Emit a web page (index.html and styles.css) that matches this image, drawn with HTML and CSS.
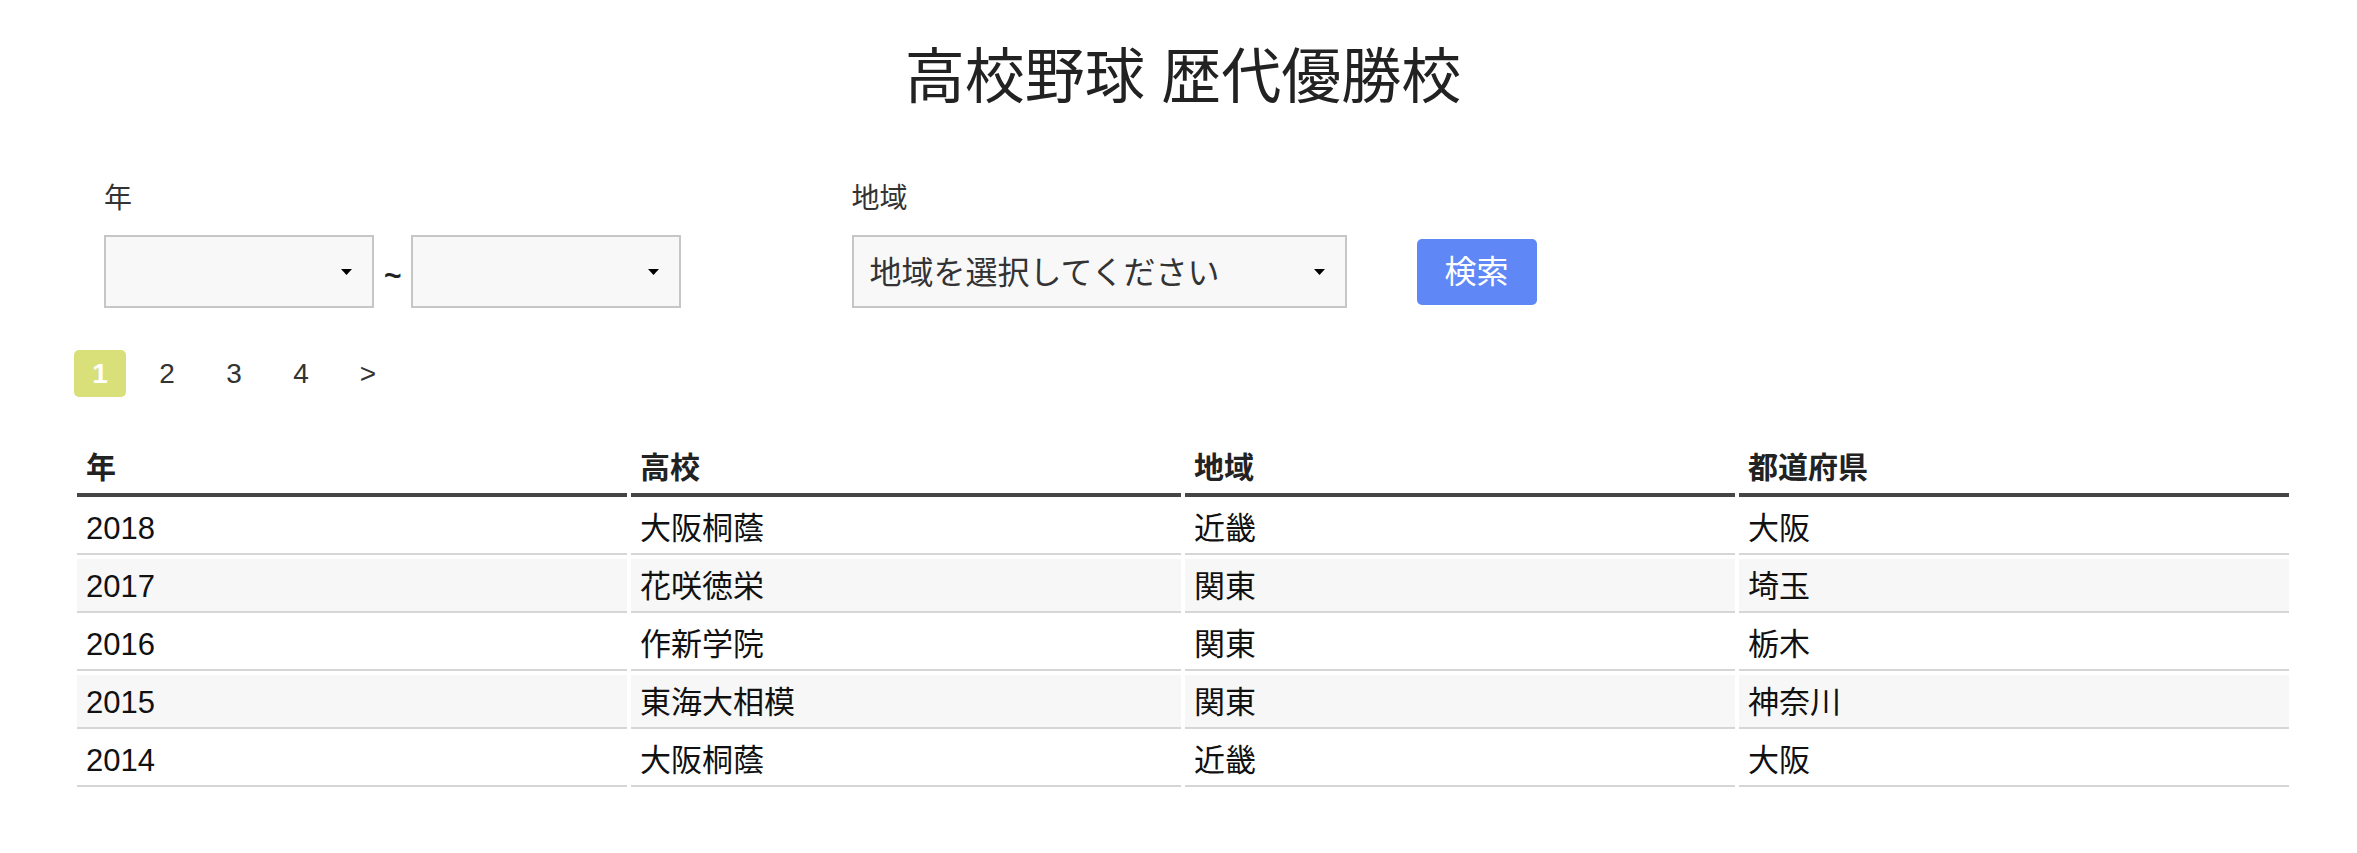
FILE: index.html
```html
<!DOCTYPE html>
<html lang="ja">
<head>
  <meta charset="UTF-8" />
  <meta name="viewport" content="width=device-width, initial-scale=1.0"/>
  <title>高校野球 歴代優勝校</title>
  <link rel="stylesheet" href="styles.css">
</head>
<body>
  <div class="page">
    <h1 class="title">高校野球 歴代優勝校</h1>

    <form class="search" onsubmit="return false">
      <div class="field field-year">
        <label>年</label>
        <div class="range">
          <div class="select">
            <span class="select-text"></span>
            <svg class="caret" width="11" height="6" viewBox="0 0 11 6"><path d="M0 0h11L5.5 6z"/></svg>
          </div>
          <span class="tilde">~</span>
          <div class="select">
            <span class="select-text"></span>
            <svg class="caret" width="11" height="6" viewBox="0 0 11 6"><path d="M0 0h11L5.5 6z"/></svg>
          </div>
        </div>
      </div>

      <div class="field field-area">
        <label>地域</label>
        <div class="select select-wide">
          <span class="select-text">地域を選択してください</span>
          <svg class="caret" width="11" height="6" viewBox="0 0 11 6"><path d="M0 0h11L5.5 6z"/></svg>
        </div>
      </div>

      <button class="btn-search" type="submit">検索</button>
    </form>

    <ul class="pager">
      <li class="active">1</li>
      <li>2</li>
      <li>3</li>
      <li>4</li>
      <li>&gt;</li>
    </ul>

    <table class="results">
      <thead>
        <tr>
          <th>年</th>
          <th>高校</th>
          <th>地域</th>
          <th>都道府県</th>
        </tr>
      </thead>
      <tbody>
        <tr><td>2018</td><td>大阪桐蔭</td><td>近畿</td><td>大阪</td></tr>
        <tr><td>2017</td><td>花咲徳栄</td><td>関東</td><td>埼玉</td></tr>
        <tr><td>2016</td><td>作新学院</td><td>関東</td><td>栃木</td></tr>
        <tr><td>2015</td><td>東海大相模</td><td>関東</td><td>神奈川</td></tr>
        <tr><td>2014</td><td>大阪桐蔭</td><td>近畿</td><td>大阪</td></tr>
      </tbody>
    </table>
  </div>
</body>
</html>
```

FILE: styles.css
```css
body {
  margin: 0;
  font-family: "Liberation Sans", "Noto Sans CJK JP", sans-serif;
  color: #222;
  background: #fff;
}

.page {
  width: 2220px;
  margin-left: 73px;
}

.title {
  margin: 42px 0 0;
  font-size: 60px;
  line-height: 72px;
  font-weight: normal;
  text-align: center;
  color: #222;
}

/* search form */
.search {
  display: flex;
  align-items: flex-end;
  margin-top: 68px;
  padding-left: 31px;
}
.field label {
  display: block;
  font-size: 28px;
  line-height: 34px;
  color: #333;
  margin-bottom: 19px;
}
.field-year {
  margin-right: 171px;
}
.field-area {
  margin-right: 70px;
}
.range {
  display: flex;
  align-items: center;
}
.select {
  box-sizing: border-box;
  width: 270px;
  height: 73px;
  display: flex;
  align-items: center;
  justify-content: space-between;
  padding: 0 20px 0 16px;
  background: #f8f8f8;
  border: 2px solid #c6c6c6;
}
.select-wide {
  width: 495px;
}
.select-text {
  font-size: 32px;
  line-height: 38px;
  padding-top: 3px;
  color: #333;
}
.caret {
  fill: #000;
  flex-shrink: 0;
}
.tilde {
  font-size: 30px;
  font-weight: bold;
  color: #222;
  margin: 8px 9px 0 10px;
}
.btn-search {
  width: 120px;
  height: 66px;
  margin-bottom: 3px;
  border: none;
  border-radius: 5px;
  background: #5f87f6;
  color: #fff;
  font-family: inherit;
  font-size: 32px;
  line-height: 38px;
  cursor: pointer;
}

/* pagination */
.pager {
  display: flex;
  gap: 15px;
  list-style: none;
  margin: 42px 0 0 1px;
  padding: 0;
}
.pager li {
  width: 52px;
  height: 47px;
  line-height: 47px;
  text-align: center;
  font-size: 28px;
  color: #333;
  border-radius: 5px;
  cursor: pointer;
}
.pager li.active {
  background: #d9e07a;
  color: #fff;
  font-weight: bold;
}

/* results */
.results {
  width: 2220px;
  table-layout: fixed;
  border-collapse: separate;
  border-spacing: 4px;
  margin-top: 38px;
}
.results th,
.results td {
  box-sizing: border-box;
  text-align: left;
  padding: 0 9px;
  font-size: 30px;
  line-height: 36px;
}
.results th {
  height: 58px;
  padding-top: 4px;
  font-weight: bold;
  color: #222;
  border-bottom: 4px solid #454545;
}
.results td {
  height: 54px;
  padding-top: 3px;
  font-size: 31px;
  color: #111;
  border-bottom: 2px solid #d6d6d6;
}
.results tbody tr:nth-child(even) td {
  background: #f7f7f7;
}
```
